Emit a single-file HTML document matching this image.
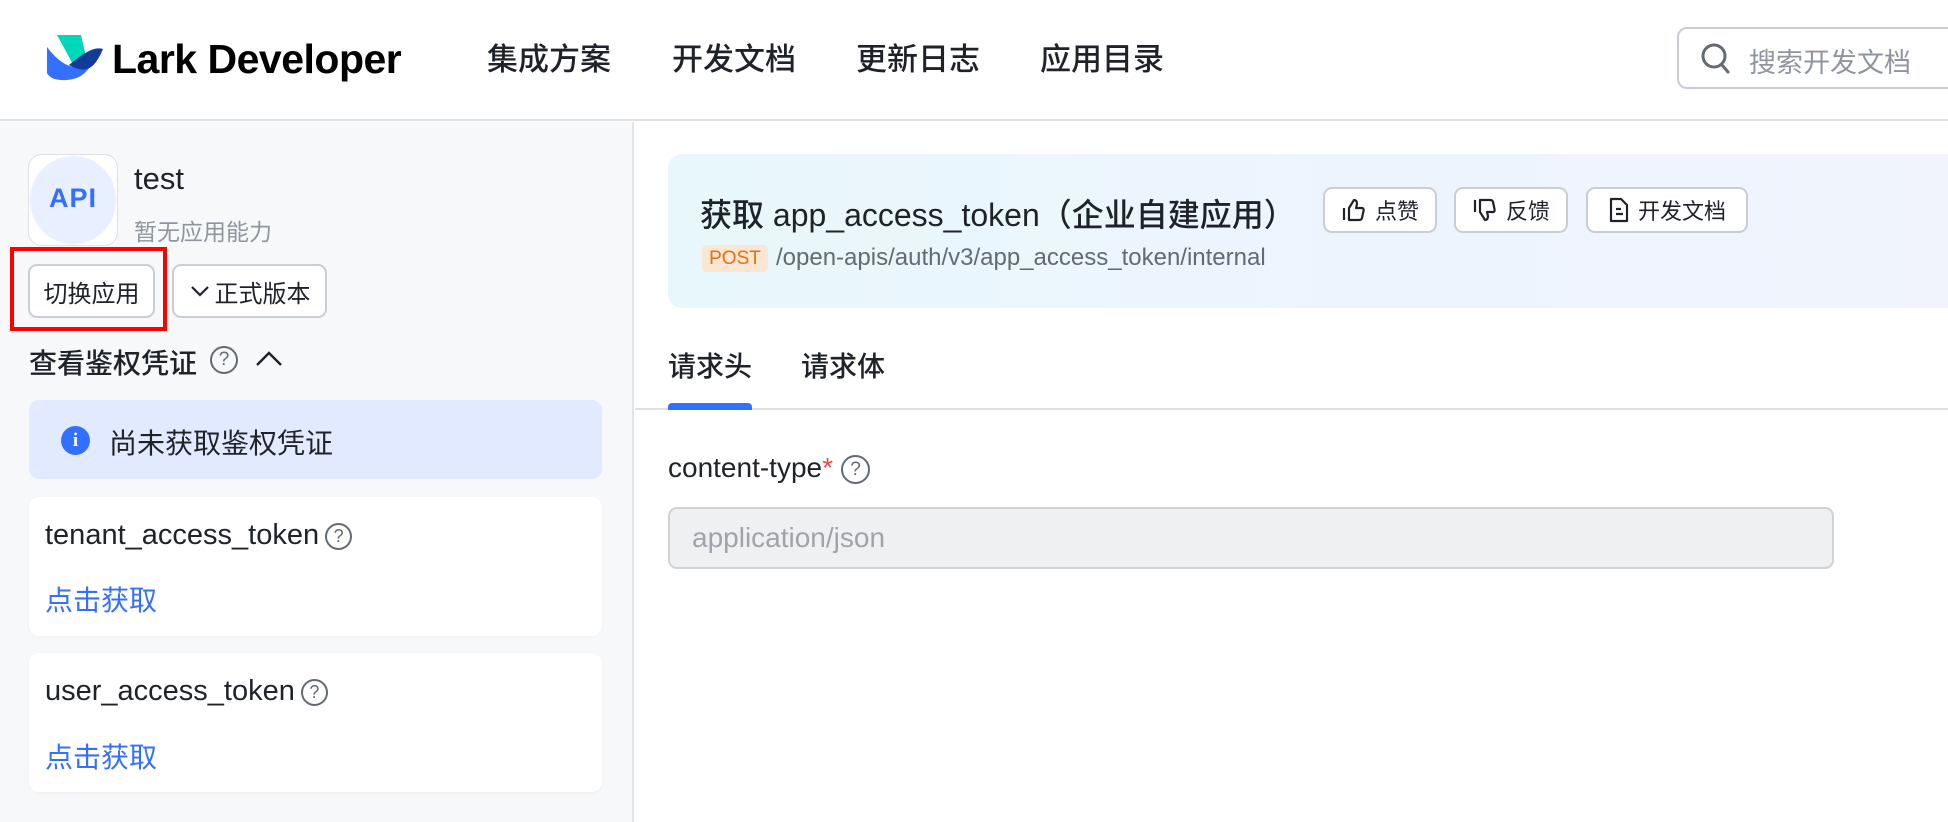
<!DOCTYPE html>
<html><head><meta charset="utf-8">
<style>
*{box-sizing:border-box;margin:0;padding:0}
body{width:1948px;height:822px;overflow:hidden;background:#fff;font-family:"Liberation Sans","Noto Sans CJK SC",sans-serif;color:#1f2329;position:relative}
.a{position:absolute;white-space:nowrap}
.nav{font-size:31px;font-weight:500;top:34px}
.btn{position:absolute;border:2px solid #c9cdd4;border-radius:9px;background:#fff;display:flex;align-items:center;justify-content:center;font-size:22px;color:#1f2329}
.help{display:inline-block;width:27px;height:27px;border:2px solid #646a73;border-radius:50%;font-size:18px;line-height:23px;text-align:center;color:#646a73;vertical-align:middle;margin-left:6px}
.card{position:absolute;left:29px;width:573px;background:#fff;border-radius:10px;box-shadow:0 1px 3px rgba(0,0,0,.04)}
</style></head><body>
<!-- header -->
<div class="a" style="left:0;top:0;width:1948px;height:121px;border-bottom:2px solid #dee0e3"></div>
<svg class="a" style="left:47px;top:35px" width="56" height="46" viewBox="0 0 56 46">
<path d="M10 0 L34 0 L40 26 L28 33 Z" fill="#00d6b9"/>
<path d="M0 12 L0 38 Q4 46 20 45 Q36 44 44 30 Q30 35 18 29 Q8 23 0 12Z" fill="#3370ff"/>
<path d="M22 30 Q34 20 42 16 Q50 12 56 14 Q50 28 44 32 Q36 38 22 30Z" fill="#133c9a"/>
</svg>
<div class="a" style="left:112px;top:36px;font-size:41px;font-weight:bold;color:#000;letter-spacing:-0.5px">Lark Developer</div>
<div class="a nav" style="left:487px">集成方案</div>
<div class="a nav" style="left:672px">开发文档</div>
<div class="a nav" style="left:856px">更新日志</div>
<div class="a nav" style="left:1040px">应用目录</div>
<div class="a" style="left:1677px;top:27px;width:300px;height:62px;border:2px solid #c9cdd4;border-radius:10px"></div>
<svg class="a" style="left:1700px;top:42px" width="32" height="34" viewBox="0 0 32 34"><circle cx="14" cy="14" r="11" fill="none" stroke="#646a73" stroke-width="3"/><path d="M22 23 L28 30" stroke="#646a73" stroke-width="3" stroke-linecap="round"/></svg>
<div class="a" style="left:1749px;top:41px;font-size:27px;color:#8f959e">搜索开发文档</div>

<!-- sidebar -->
<div class="a" style="left:0;top:122px;width:634px;height:700px;background:#f7f8fa;border-right:2px solid #e4e5e7"></div>
<div class="a" style="left:28px;top:154px;width:90px;height:92px;border:1px solid #dee0e3;border-radius:14px;background:#fff;overflow:hidden">
 <div style="position:absolute;left:1px;top:1px;width:86px;height:88px;border-radius:50%;background:#e8effe"></div>
 <div style="position:absolute;left:0;width:88px;top:28px;text-align:center;font-size:27px;font-weight:bold;color:#3370ff;letter-spacing:1px">API</div>
</div>
<div class="a" style="left:134px;top:161px;font-size:31px;font-weight:500">test</div>
<div class="a" style="left:134px;top:213px;font-size:23px;color:#8f959e">暂无应用能力</div>
<div class="btn" style="left:28px;top:264px;width:127px;height:54px;font-size:24px">切换应用</div>
<div class="btn" style="left:172px;top:264px;width:155px;height:54px;font-size:24px"><svg width="22" height="14" viewBox="0 0 22 14" style="margin-right:4px"><path d="M3 3 L11 11 L19 3" fill="none" stroke="#1f2329" stroke-width="2.2"/></svg>正式版本</div>
<div class="a" style="left:10px;top:247px;width:157px;height:84px;border:4px solid #f00"></div>
<div class="a" style="left:29px;top:342px;font-size:28px;font-weight:500">查看鉴权凭证</div>
<div class="a" style="left:210px;top:346px;width:28px;height:28px;border:2px solid #646a73;border-radius:50%;font-size:19px;line-height:24px;text-align:center;color:#646a73">?</div>
<svg class="a" style="left:254px;top:350px" width="30" height="18" viewBox="0 0 30 18"><path d="M3 15 L15 3 L27 15" fill="none" stroke="#1f2329" stroke-width="2.4"/></svg>
<div class="a" style="left:29px;top:400px;width:573px;height:79px;background:#e1eaff;border-radius:10px"></div>
<div class="a" style="left:61px;top:426px;width:29px;height:29px;border-radius:50%;background:#3370ff;color:#fff;font-size:19px;font-weight:bold;line-height:29px;text-align:center;font-family:'Liberation Serif',serif">i</div>
<div class="a" style="left:109px;top:422px;font-size:28px">尚未获取鉴权凭证</div>

<div class="card" style="top:497px;height:139px"></div>
<div class="a" style="left:45px;top:519px;font-size:29px">tenant_access_token<span class="help">?</span></div>
<div class="a" style="left:45px;top:579px;font-size:28px;color:#3370ff">点击获取</div>
<div class="card" style="top:653px;height:139px"></div>
<div class="a" style="left:45px;top:675px;font-size:29px">user_access_token<span class="help">?</span></div>
<div class="a" style="left:45px;top:736px;font-size:28px;color:#3370ff">点击获取</div>

<!-- main -->
<div class="a" style="left:668px;top:154px;width:1300px;height:154px;border-radius:14px;background:linear-gradient(90deg,#e8f7fc,#eef4fe 60%,#f1f4fd)"></div>
<div class="a" style="left:700px;top:190px;font-size:32px;font-weight:500">获取 app_access_token（企业自建应用）</div>
<div class="btn" style="left:1323px;top:187px;width:114px;height:46px"><svg width="26" height="24" viewBox="0 0 26 24" style="margin-right:8px"><path d="M3 10 V22 M8 22 V10 L13 2 Q16 2 16 6 L15 10 H21 Q23 10 22.5 13 L21 20 Q20.5 22 18 22 Z" fill="none" stroke="#1f2329" stroke-width="2.2" stroke-linejoin="round"/></svg>点赞</div>
<div class="btn" style="left:1454px;top:187px;width:114px;height:46px"><svg width="26" height="24" viewBox="0 0 26 24" style="margin-right:8px"><path d="M3 2 V14 M8 2 V14 L13 22 Q16 22 16 18 L15 14 H21 Q23 14 22.5 11 L21 4 Q20.5 2 18 2 Z" fill="none" stroke="#1f2329" stroke-width="2.2" stroke-linejoin="round"/></svg>反馈</div>
<div class="btn" style="left:1586px;top:187px;width:162px;height:46px"><svg width="22" height="26" viewBox="0 0 22 26" style="margin-right:8px"><path d="M3 2 H13 L19 8 V24 H3 Z M8 12 H13 M8 17 H15" fill="none" stroke="#1f2329" stroke-width="2.2" stroke-linejoin="round"/></svg>开发文档</div>
<div class="a" style="left:702px;top:245px;width:66px;height:27px;background:#fbe6d2;border-radius:5px;color:#ed6d0c;font-size:19px;line-height:27px;text-align:center">POST</div>
<div class="a" style="left:776px;top:244px;font-size:24px;color:#646a73">/open-apis/auth/v3/app_access_token/internal</div>

<div class="a" style="left:668px;top:345px;font-size:28px;font-weight:500">请求头</div>
<div class="a" style="left:801px;top:345px;font-size:28px;font-weight:500">请求体</div>
<div class="a" style="left:635px;top:408px;width:1313px;height:2px;background:#dee0e3"></div>
<div class="a" style="left:668px;top:403px;width:84px;height:7px;background:#3370ff;border-radius:4px 4px 0 0"></div>

<div class="a" style="left:668px;top:452px;font-size:28px;font-weight:500">content-type<span style="color:#f54a45;font-weight:normal">*</span><span class="help" style="width:29px;height:29px;line-height:25px;font-size:19px;margin-left:8px">?</span></div>
<div class="a" style="left:668px;top:507px;width:1166px;height:62px;background:#eff0f1;border:2px solid #d0d3d6;border-radius:9px"></div>
<div class="a" style="left:692px;top:522px;font-size:28px;color:#a0a4aa">application/json</div>
</body></html>
